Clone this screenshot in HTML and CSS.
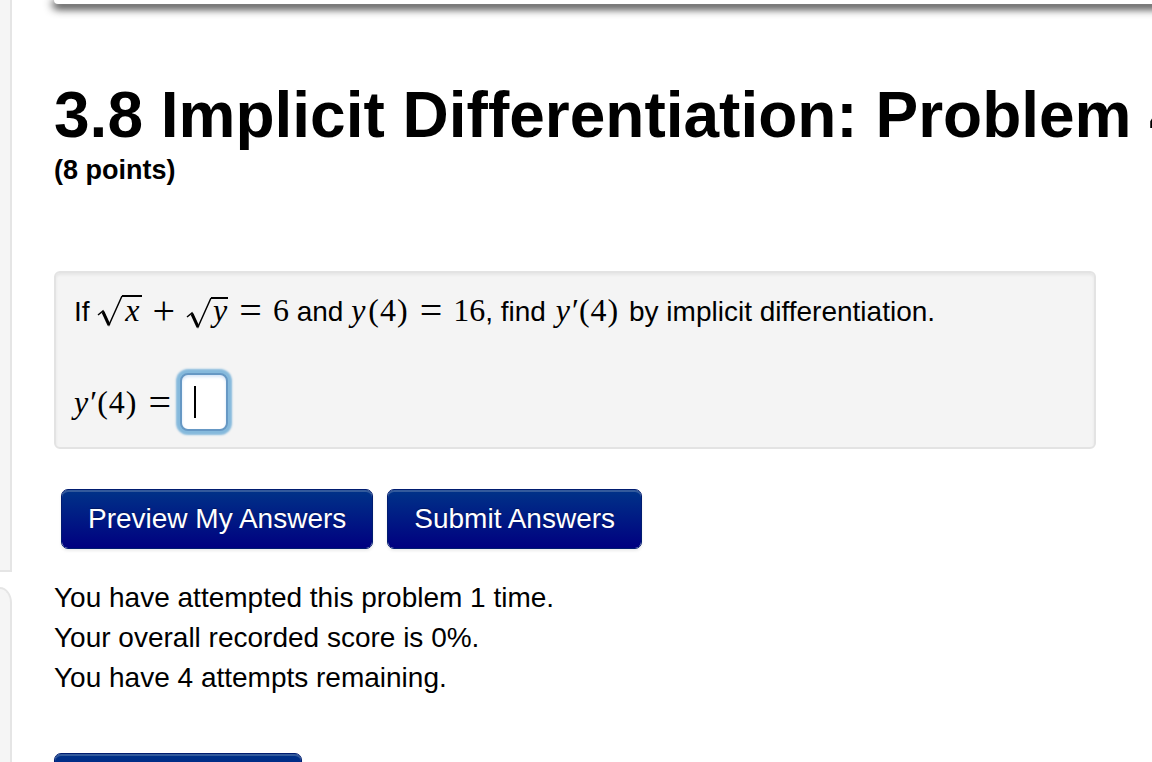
FILE: index.html
```html
<!DOCTYPE html>
<html lang="en">
<head>
<meta charset="utf-8">
<title>3.8 Implicit Differentiation: Problem 4</title>
<link rel="stylesheet" href="styles.css">
</head>
<body>
<div class="page">
  <aside class="sidebar">
    <div class="panel panel-top"></div>
    <div class="panel panel-bottom"></div>
  </aside>
  <main class="main">
    <div class="banner"></div>
    <h1 class="title">3.8 Implicit Differentiation: Problem 4</h1>
    <p class="points">(8 points)</p>
    <form>
      <section class="problem">
        <p class="statement">If <span class="math"><span class="root"><svg class="radical" viewBox="0 0 26 34" aria-hidden="true"><path d="M1 21 L6 17 L12 31 L25 2" /><path class="heavy" d="M6 18 L12 31" /></svg><i class="radicand">x</i></span><span class="op">+</span><span class="root root-low"><svg class="radical" viewBox="0 0 26 34" aria-hidden="true"><path d="M1 21 L6 17 L12 31 L25 2" /><path class="heavy" d="M6 18 L12 31" /></svg><i class="radicand">y</i></span><span class="op">=</span>6</span> and <span class="math"><i class="var">y</i><span class="paren">(</span>4<span class="paren">)</span><span class="op">=</span>16</span>, find <span class="math math-wide"><i class="var">y</i><i class="prime">′</i><span class="paren">(</span>4<span class="paren">)</span></span> by implicit differentiation.</p>
        <div class="answer">
          <label class="math" for="answer"><i class="var">y</i><i class="prime">′</i><span class="paren">(</span>4<span class="paren">)</span><span class="op op-last">=</span></label>
          <span class="field"><input class="input" id="answer" type="text"><span class="caret"></span></span>
        </div>
      </section>
      <div class="actions">
        <button class="btn" type="button">Preview My Answers</button>
        <button class="btn" type="button">Submit Answers</button>
      </div>
    </form>
    <p class="status">You have attempted this problem 1 time.<br>Your overall recorded score is 0%.<br>You have 4 attempts remaining.</p>
    <button class="btn btn-wide" type="button" aria-label="Email instructor"></button>
  </main>
</div>
</body>
</html>
```
FILE: styles.css
```css
* { box-sizing: border-box; }
body {
  margin: 0;
  background: #fff;
  color: #000;
  font-family: "Liberation Sans", Arial, sans-serif;
  font-size: 28px;
  line-height: 40px;
}
p, h1 { margin: 0; }
.page {
  display: grid;
  grid-template-columns: 12px minmax(0, 1fr);
  height: 100vh;
  overflow: hidden;
}
.sidebar {
  display: flex;
  flex-direction: column;
  gap: 15px;
}
.panel {
  background: #f5f5f5;
  border-right: 2px solid #e5e5e5;
}
.panel-top {
  flex: 0 0 75vh;
  border-bottom: 2px solid #e5e5e5;
}
.panel-bottom {
  flex: 1;
  border-top: 2px solid #e5e5e5;
  border-top-right-radius: 12px 16px;
}
.main { padding-left: 42px; }
.banner {
  height: 4px;
  margin-right: -20px;
  border-bottom-left-radius: 8px;
  background: #fff;
  box-shadow: 0 3px 8px 2px #333;
}
.title {
  padding-top: 72px;
  font-size: 64px;
  line-height: 78px;
  white-space: nowrap;
}
.points {
  padding-bottom: 84px;
  line-height: 33px;
  font-size: 27px;
  font-weight: bold;
}
.problem {
  margin-right: 56px;
  padding: 19px 18px 16px;
  border: 2px solid #e3e3e3;
  border-radius: 6px;
  background: #f4f4f4;
  box-shadow: inset 0 2px 3px rgba(0, 0, 0, 0.06);
}
.statement {
  height: 40px;
  white-space: nowrap;
}
.math {
  font-family: "Liberation Serif", serif;
  font-size: 32px;
  line-height: 32px;
}
.math-wide { margin: 0 2px; }
.var { margin-right: 2px; }
.paren { margin: 0 1px; }
.prime { margin: 0 1px 0 -2px; }
.op {
  margin: 0 11px;
  font-size: 40px;
  line-height: 24px;
  vertical-align: -3px;
}
.op-last { margin-right: 9px; }
.radical {
  width: 26px;
  height: 34px;
  vertical-align: -7px;
  fill: none;
  stroke: #000;
  stroke-width: 1.5;
}
.heavy { stroke-width: 3; }
.radicand {
  display: inline-block;
  margin-left: -1px;
  padding: 0 2px 0 3px;
  border-top: 2px solid #000;
  line-height: 26px;
}
.root-low .radical { vertical-align: -9px; }
.root-low .radicand {
  padding: 0 1px 0 2px;
  line-height: 22px;
}
.answer {
  display: flex;
  align-items: center;
  padding-top: 41px;
}
.field { position: relative; display: flex; }
.input {
  width: 48px;
  height: 58px;
  padding: 8px 12px;
  border: 2px solid #6698c4;
  border-radius: 8px;
  outline: none;
  background: #fff;
  font: inherit;
  box-shadow: inset 0 2px 3px #d5e5f8, 0 0 2px 4px #85b9dc;
}
.caret {
  position: absolute;
  left: 14px;
  top: 13px;
  width: 2px;
  height: 32px;
  background: #000;
}
.actions {
  display: flex;
  gap: 14px;
  padding: 40px 7px 29px;
}
.btn {
  height: 60px;
  padding: 0 26px;
  border: 1px solid #001c70;
  border-radius: 7px;
  background: linear-gradient(#003388, #000080) padding-box;
  box-shadow: inset 0 2px 0 #335a9c, 0 2px 3px rgba(0, 0, 0, 0.08);
  color: #fff;
  font: inherit;
  text-shadow: 0 -1px 1px rgba(0, 0, 0, 0.3);
}
.btn-wide {
  display: block;
  width: 248px;
  margin-top: 55px;
}
```
